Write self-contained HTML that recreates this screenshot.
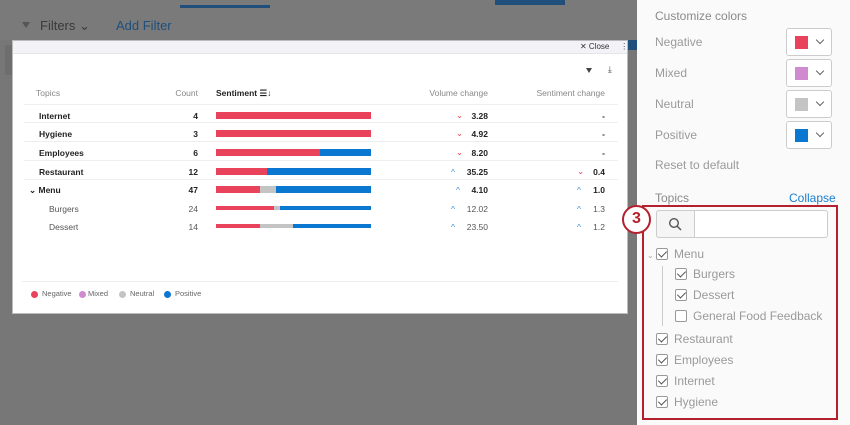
<!DOCTYPE html>
<html><head><meta charset="utf-8"><style>
*{box-sizing:border-box;margin:0;padding:0}
body{width:850px;height:425px;overflow:hidden;background:#777;font-family:"Liberation Sans",sans-serif;position:relative}
.abs{position:absolute}
.t{font-size:8.5px;color:#333;white-space:nowrap}
.b{font-weight:bold;color:#222}
.bar{position:absolute;left:216px;width:155px;display:flex}
.bar span{display:block;height:100%}
.r{text-align:right}
.row{position:absolute;left:24px;width:594px;border-bottom:1px solid #eee}
.pl{position:absolute;left:655px;font-size:12px;color:#9a9a9a}
.sw{position:absolute;left:786px;width:46px;height:28px;border:1px solid #ccc;border-radius:3px;background:#fff}
.sw i{position:absolute;left:8px;top:7px;width:13px;height:13px}
.sw b{position:absolute;left:30px;top:8px;width:6px;height:6px;border-right:1.3px solid #666;border-bottom:1.3px solid #666;transform:rotate(45deg)}
.cb{position:absolute;width:12px;height:12px;border:1px solid #999;border-radius:2px;background:#fff}
.cb.c::after{content:"";position:absolute;left:3px;top:0px;width:4px;height:7px;border-right:1.2px solid #555;border-bottom:1.2px solid #555;transform:rotate(45deg)}
.cl{position:absolute;font-size:12px;color:#9a9a9a;white-space:nowrap}
.dot{position:absolute;top:291px;width:7px;height:7px;border-radius:50%}
</style></head><body>
<div class="abs" style="left:0;top:0;width:637px;height:40px;background:#7a7a7a"></div>
<div class="abs" style="left:180px;top:5px;width:90px;height:3px;background:#1f4f7a"></div>
<div class="abs" style="left:495px;top:0;width:70px;height:5px;background:#1f4f7a"></div>
<div class="abs" style="left:22px;top:22px;width:0;height:0;border-left:4px solid transparent;border-right:4px solid transparent;border-top:6px solid #555"></div>
<div class="abs" style="left:40px;top:18px;font-size:13px;color:#3a3a3a">Filters ⌄</div>
<div class="abs" style="left:116px;top:18px;font-size:13px;color:#1f4f7a">Add Filter</div>
<div class="abs" style="left:624px;top:40px;width:13px;height:10px;background:#1f4f7a"></div>
<div class="abs" style="left:5px;top:45px;width:7px;height:30px;background:#6e6e6e"></div>

<div class="abs" style="left:12px;top:40px;width:616px;height:274px;background:#fff;border:1px solid #bbb">
 <div class="abs" style="left:0;top:0;width:100%;height:13px;background:#f2f2f7;border-bottom:1px solid #e4e4ea"></div>
 <div class="abs t" style="left:567px;top:1px;font-size:8px;color:#333">✕ Close</div>
 <div class="abs t" style="left:607px;top:0px;color:#555">⋮</div>
 <div class="abs" style="left:573px;top:27px;width:0;height:0;border-left:3px solid transparent;border-right:3px solid transparent;border-top:5px solid #444"></div>
 <div class="abs t" style="left:595px;top:23px;color:#444">⤓</div>
</div>

<div class="abs t" style="left:36px;top:88px;color:#888">Topics</div>
<div class="abs t r" style="left:160px;top:88px;width:38px;color:#888">Count</div>
<div class="abs t b" style="left:216px;top:88px">Sentiment ☰↓</div>
<div class="abs t r" style="left:400px;top:88px;width:88px;color:#888">Volume change</div>
<div class="abs t r" style="left:500px;top:88px;width:105px;color:#888">Sentiment change</div>
<div class="abs" style="left:24px;top:104px;width:594px;border-top:1px solid #eee"></div>

<div class="row" style="top:104px;height:19px"></div>
<div class="row" style="top:123px;height:19px"></div>
<div class="row" style="top:142px;height:19px"></div>
<div class="row" style="top:161px;height:19px"></div>

<div class="abs t b" style="left:39px;top:111px">Internet</div>
<div class="abs t b r" style="left:170px;top:111px;width:28px">4</div>
<div class="bar" style="top:112px;height:7px"><span style="width:100%;background:#e8435a"></span></div>
<div class="abs t" style="left:456px;top:110px;color:#e8435a">⌄</div>
<div class="abs t b r" style="left:460px;top:111px;width:28px">3.28</div>
<div class="abs t b r" style="left:580px;top:111px;width:25px">-</div>

<div class="abs t b" style="left:39px;top:129px">Hygiene</div>
<div class="abs t b r" style="left:170px;top:129px;width:28px">3</div>
<div class="bar" style="top:130px;height:7px"><span style="width:100%;background:#e8435a"></span></div>
<div class="abs t" style="left:456px;top:128px;color:#e8435a">⌄</div>
<div class="abs t b r" style="left:460px;top:129px;width:28px">4.92</div>
<div class="abs t b r" style="left:580px;top:129px;width:25px">-</div>

<div class="abs t b" style="left:39px;top:148px">Employees</div>
<div class="abs t b r" style="left:170px;top:148px;width:28px">6</div>
<div class="bar" style="top:149px;height:7px"><span style="width:67%;background:#e8435a"></span><span style="width:33%;background:#0a78d0"></span></div>
<div class="abs t" style="left:456px;top:147px;color:#e8435a">⌄</div>
<div class="abs t b r" style="left:460px;top:148px;width:28px">8.20</div>
<div class="abs t b r" style="left:580px;top:148px;width:25px">-</div>

<div class="abs t b" style="left:39px;top:167px">Restaurant</div>
<div class="abs t b r" style="left:170px;top:167px;width:28px">12</div>
<div class="bar" style="top:168px;height:7px"><span style="width:33%;background:#e8435a"></span><span style="width:67%;background:#0a78d0"></span></div>
<div class="abs t" style="left:451px;top:167px;color:#3a8fd8">^</div>
<div class="abs t b r" style="left:460px;top:167px;width:28px">35.25</div>
<div class="abs t" style="left:577px;top:166px;color:#e8435a">⌄</div>
<div class="abs t b r" style="left:580px;top:167px;width:25px">0.4</div>

<div class="abs t b" style="left:29px;top:185px">⌄ Menu</div>
<div class="abs t b r" style="left:170px;top:185px;width:28px">47</div>
<div class="bar" style="top:186px;height:7px"><span style="width:28.5%;background:#e8435a"></span><span style="width:10%;background:#c4c4c4"></span><span style="width:61.5%;background:#0a78d0"></span></div>
<div class="abs t" style="left:456px;top:185px;color:#3a8fd8">^</div>
<div class="abs t b r" style="left:460px;top:185px;width:28px">4.10</div>
<div class="abs t" style="left:577px;top:185px;color:#3a8fd8">^</div>
<div class="abs t b r" style="left:580px;top:185px;width:25px">1.0</div>

<div class="abs t" style="left:49px;top:204px;color:#555">Burgers</div>
<div class="abs t r" style="left:170px;top:204px;width:28px;color:#555">24</div>
<div class="bar" style="top:206px;height:4px"><span style="width:37.5%;background:#e8435a"></span><span style="width:4%;background:#c4c4c4"></span><span style="width:58.5%;background:#0a78d0"></span></div>
<div class="abs t" style="left:451px;top:204px;color:#3a8fd8">^</div>
<div class="abs t r" style="left:460px;top:204px;width:28px;color:#555">12.02</div>
<div class="abs t" style="left:577px;top:204px;color:#3a8fd8">^</div>
<div class="abs t r" style="left:580px;top:204px;width:25px;color:#555">1.3</div>

<div class="abs t" style="left:49px;top:222px;color:#555">Dessert</div>
<div class="abs t r" style="left:170px;top:222px;width:28px;color:#555">14</div>
<div class="bar" style="top:224px;height:4px"><span style="width:28.5%;background:#e8435a"></span><span style="width:21.5%;background:#c4c4c4"></span><span style="width:50%;background:#0a78d0"></span></div>
<div class="abs t" style="left:451px;top:222px;color:#3a8fd8">^</div>
<div class="abs t r" style="left:460px;top:222px;width:28px;color:#555">23.50</div>
<div class="abs t" style="left:577px;top:222px;color:#3a8fd8">^</div>
<div class="abs t r" style="left:580px;top:222px;width:25px;color:#555">1.2</div>

<div class="abs" style="left:22px;top:281px;width:596px;border-top:1px solid #eee"></div>
<div class="dot" style="left:31px;background:#e8435a"></div><div class="abs t" style="left:42px;top:289px;font-size:7.5px;color:#666">Negative</div>
<div class="dot" style="left:79px;background:#d08ad0"></div><div class="abs t" style="left:88px;top:289px;font-size:7.5px;color:#666">Mixed</div>
<div class="dot" style="left:119px;background:#c4c4c4"></div><div class="abs t" style="left:130px;top:289px;font-size:7.5px;color:#666">Neutral</div>
<div class="dot" style="left:164px;background:#0a78d0"></div><div class="abs t" style="left:175px;top:289px;font-size:7.5px;color:#666">Positive</div>

<div class="abs" style="left:637px;top:0;width:213px;height:425px;background:#fafafa"></div>
<div class="pl" style="top:9px;color:#8a8a8a">Customize colors</div>
<div class="pl" style="top:35px">Negative</div>
<div class="pl" style="top:66px">Mixed</div>
<div class="pl" style="top:97px">Neutral</div>
<div class="pl" style="top:128px">Positive</div>
<div class="sw" style="top:28px"><i style="background:#e8435a"></i><b></b></div>
<div class="sw" style="top:59px"><i style="background:#d08ad0"></i><b></b></div>
<div class="sw" style="top:90px"><i style="background:#c4c4c4"></i><b></b></div>
<div class="sw" style="top:121px"><i style="background:#0a78d0"></i><b></b></div>
<div class="pl" style="top:158px">Reset to default</div>
<div class="pl" style="top:191px;color:#8a8a8a">Topics</div>
<div class="pl" style="top:191px;left:789px;color:#1a7fd0">Collapse</div>

<div class="abs" style="left:642px;top:205px;width:196px;height:215px;border:2.5px solid #b5202e"></div>
<div class="abs" style="left:622px;top:205px;width:29px;height:29px;border:2.5px solid #b5202e;border-radius:50%;background:#fff;font-size:16px;font-weight:bold;color:#b5202e;text-align:center;line-height:24px">3</div>
<div class="abs" style="left:656px;top:210px;width:172px;height:28px;border:1px solid #ccc;border-radius:3px;background:#fff"></div>
<div class="abs" style="left:656px;top:210px;width:39px;height:28px;border:1px solid #ccc;border-radius:3px 0 0 3px;background:#f5f5f5"></div>
<svg class="abs" style="left:668px;top:217px" width="14" height="14" viewBox="0 0 14 14"><circle cx="6" cy="6" r="4.3" fill="none" stroke="#555" stroke-width="1.4"/><path d="M9 9L13 13" stroke="#555" stroke-width="1.5"/></svg>

<div class="abs" style="left:647px;top:251px;font-size:8px;color:#aaa">⌄</div>
<div class="abs" style="left:662px;top:266px;width:1px;height:60px;background:#ccc"></div>
<div class="cb c" style="left:656px;top:248px"></div><div class="cl" style="left:674px;top:247px">Menu</div>
<div class="cb c" style="left:675px;top:268px"></div><div class="cl" style="left:693px;top:267px">Burgers</div>
<div class="cb c" style="left:675px;top:289px"></div><div class="cl" style="left:693px;top:288px">Dessert</div>
<div class="cb" style="left:675px;top:310px"></div><div class="cl" style="left:693px;top:309px">General Food Feedback</div>
<div class="cb c" style="left:656px;top:333px"></div><div class="cl" style="left:674px;top:332px">Restaurant</div>
<div class="cb c" style="left:656px;top:354px"></div><div class="cl" style="left:674px;top:353px">Employees</div>
<div class="cb c" style="left:656px;top:375px"></div><div class="cl" style="left:674px;top:374px">Internet</div>
<div class="cb c" style="left:656px;top:396px"></div><div class="cl" style="left:674px;top:395px">Hygiene</div>
</body></html>
